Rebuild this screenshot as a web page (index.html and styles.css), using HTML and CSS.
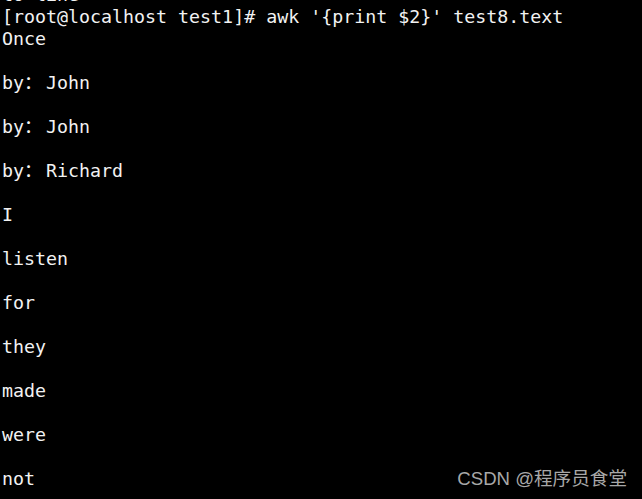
FILE: index.html
```html
<!DOCTYPE html>
<html>
<head>
<meta charset="utf-8">
<link rel="stylesheet" href="styles.css">
</head>
<body>
<pre class="term">to line
[root@localhost test1]# awk '{print $2}' test8.text
Once

by<span class="fw">：</span>John

by<span class="fw">：</span>John

by<span class="fw">：</span>Richard

I

listen

for

they

made

were

not</pre>
<div class="mark">CSDN @程序员食堂</div>
</body>
</html>
```
FILE: styles.css
```css
html, body {
  margin: 0;
  padding: 0;
  background: #000;
  width: 642px;
  height: 499px;
  overflow: hidden;
}
body {
  position: relative;
}
.term {
  margin: -16px 0 0 0;
  padding-left: 2px;
  font-family: "DejaVu Sans Mono", "Noto Sans CJK SC", monospace;
  font-size: 18.3px;
  line-height: 22px;
  color: #f2f2f2;
  white-space: pre;
}
.fw {
  display: inline-block;
  width: 2ch;
  text-align: left;
}
.mark {
  position: absolute;
  right: 15px;
  bottom: 9px;
  font-family: "Liberation Sans", "Noto Sans CJK SC", sans-serif;
  font-size: 18.6px;
  color: #a8a8a8;
}
```
